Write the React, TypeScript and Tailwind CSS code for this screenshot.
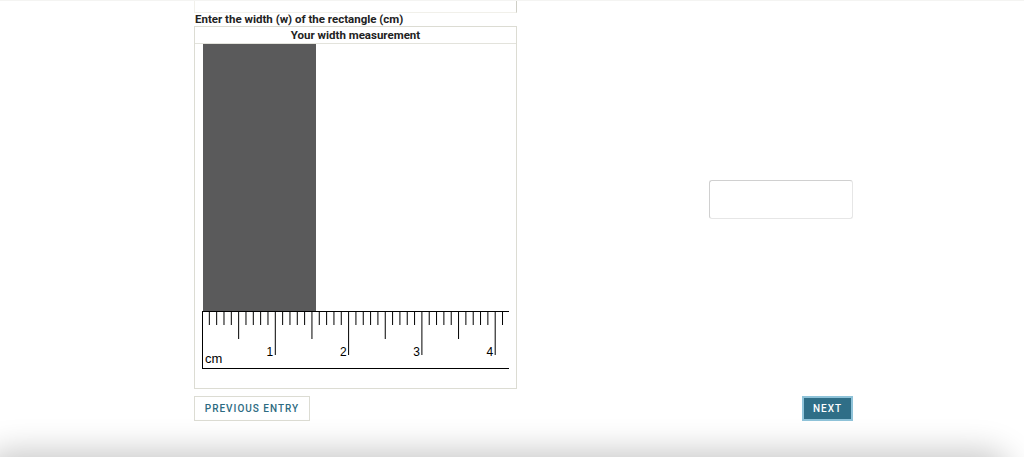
import React from 'react';

const CM = 73.3;

const Ruler: React.FC = () => {
    const ticks: React.ReactNode[] = [];
    for (let i = 1; i <= 41; i++) {
        const x = 2 + (i * CM) / 10;
        const len = i % 10 === 0 ? 44 : i % 5 === 0 ? 28 : 14;
        ticks.push(<line key={i} x1={x} y1={0} x2={x} y2={len} stroke="#000" strokeWidth={1} />);
    }
    const labels = [1, 2, 3, 4].map((n) => (
        <text key={n} x={2 + n * CM - 2} y={45} textAnchor="end" fontSize={12} fill="#000" fontFamily="'Liberation Sans', Arial, sans-serif">
            {n}
        </text>
    ));

    return (
        <svg width={312} height={59} className="block -ml-[3px]">
            <line x1={2} y1={0.5} x2={309} y2={0.5} stroke="#000" strokeWidth={1} />
            <line x1={2.5} y1={0} x2={2.5} y2={58} stroke="#000" strokeWidth={1} />
            <line x1={2} y1={57.5} x2={309} y2={57.5} stroke="#000" strokeWidth={1} />
            {ticks}
            {labels}
            <text x={5} y={52} fontSize={13} fill="#000" fontFamily="'Liberation Sans', Arial, sans-serif">
                cm
            </text>
        </svg>
    );
};

export default function App() {
    return (
        <div className="relative h-[457px] w-[1024px] overflow-hidden bg-white font-['Roboto',sans-serif] text-[#222]">
            <div className="absolute inset-x-0 top-0 h-px bg-[#f4f4f2]"></div>

            <div className="flex w-[659px] ml-[194px]">
                {/* Left column */}
                <div className="w-[323px] flex flex-col">
                    <div className="h-[13px] border-l border-b border-r border-l-[#f1f0ea] border-b-[#f1f0ea] border-r-[#cfcfc6]"></div>
                    <div className="h-[13px] pl-px text-[11.5px] font-bold leading-[13px] text-[#222]">
                        Enter the width (w) of the rectangle (cm)
                    </div>
                    <div className="border border-[#dcdcd3]">
                        <div className="h-[17px] border-b border-[#e3e3dc] text-center text-[11.5px] font-bold leading-[16px]">
                            Your width measurement
                        </div>
                        <div className="pl-[8px] pb-[18px]">
                            <div className="w-[113px] h-[267px] bg-[#5a5a5b]"></div>
                            <Ruler />
                        </div>
                    </div>
                </div>

                {/* Right column */}
                <div className="flex-1 flex justify-end items-start pt-[180px]">
                    <input
                        type="text"
                        className="w-[144px] h-[39px] rounded-[3px] border border-[#d0d0d0] border-r-[#e6e6e6] border-b-[#e6e6e6] bg-white outline-none"
                    />
                </div>
            </div>

            <div className="flex justify-between w-[659px] ml-[194px] mt-[7px]">
                <button className="h-[25px] w-[116px] border border-[#dcdcd3] bg-white text-[10px] font-medium tracking-[1px] text-[#2d6b82]">
                    PREVIOUS ENTRY
                </button>
                <button className="h-[25px] w-[51px] border-2 border-[#8fc3d9] bg-[#2f6e87] text-[10px] font-medium tracking-[1px] text-white">
                    NEXT
                </button>
            </div>

            <div className="absolute left-[-10px] right-[20px] top-[457px] h-[40px] rounded-[30px] shadow-[0_0_32px_6px_rgba(0,0,0,0.22)]"></div>
        </div>
    );
}
